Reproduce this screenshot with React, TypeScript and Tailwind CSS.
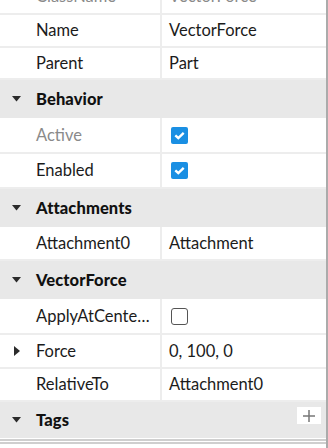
import React from "react";

type Row =
  | { kind: "prop"; label: string; value?: string; check?: boolean; muted?: boolean; expand?: boolean; h: string }
  | { kind: "head"; label: string; plus?: boolean; h: string };

const rows: Row[] = [
  { kind: "prop", label: "ClassName", value: "VectorForce", muted: true, h: "h-[35px] -mt-[20px]" },
  { kind: "prop", label: "Name", value: "VectorForce", h: "h-[33px]" },
  { kind: "prop", label: "Parent", value: "Part", h: "h-[32px]" },
  { kind: "head", label: "Behavior", h: "h-[38px]" },
  { kind: "prop", label: "Active", check: true, muted: true, h: "h-[36px]" },
  { kind: "prop", label: "Enabled", check: true, h: "h-[35px]" },
  { kind: "head", label: "Attachments", h: "h-[38px]" },
  { kind: "prop", label: "Attachment0", value: "Attachment", h: "h-[34px]" },
  { kind: "head", label: "VectorForce", h: "h-[38px]" },
  { kind: "prop", label: "ApplyAtCente…", check: false, h: "h-[36px]" },
  { kind: "prop", label: "Force", value: "0, 100, 0", expand: true, h: "h-[34px]" },
  { kind: "prop", label: "RelativeTo", value: "Attachment0", h: "h-[33px]" },
  { kind: "head", label: "Tags", plus: true, h: "h-[36px]" },
];

function Check({ on }: { on: boolean }) {
  if (on)
    return (
      <div className="w-[17px] h-[17px] rounded-[2px] bg-[#1a8fe3] flex items-center justify-center">
        <svg width="11" height="9" viewBox="0 0 11 9">
          <path d="M1.3 4.3 L4.3 7 L9.7 1.8" fill="none" stroke="white" strokeWidth="2.4" />
        </svg>
      </div>
    );
  return <div className="w-[17px] h-[17px] rounded-[3px] border-[1.5px] border-[#555] bg-white" />;
}

export default function App() {
  return (
    <div
      className="w-[328px] h-[448px] overflow-hidden bg-white flex"
      style={{ fontFamily: "Lato, 'Noto Sans', sans-serif" }}
    >
      <div className="w-[326px] flex flex-col">
        {rows.map((r, i) =>
          r.kind === "head" ? (
            <div key={i} className={`${r.h} shrink-0 bg-[#e8e8e8] flex items-center relative`}>
              <div className="w-[36px] flex justify-center pl-[2px] pr-[6px]">
                <svg width="9" height="6" viewBox="0 0 9 6">
                  <path d="M0 0 H9 L4.5 5.5 Z" fill="#2b2b2b" />
                </svg>
              </div>
              <span className="text-[16.5px] font-black text-[#111] tracking-[0.1px]">{r.label}</span>
              {r.plus && (
                <div className="absolute right-[5px] top-[5px] w-[24px] h-[17px] bg-white flex items-center justify-center">
                  <svg width="12" height="12" viewBox="0 0 12 12">
                    <path d="M6 0 V12 M0 6 H12" stroke="#777" strokeWidth="1.5" />
                  </svg>
                </div>
              )}
            </div>
          ) : (
            <div key={i} className={`${r.h} shrink-0 flex border-b-2 border-[#ededed]`}>
              <div className="w-[162px] flex items-center border-r-2 border-[#ededed] overflow-hidden">
                <div className="w-[36px] shrink-0 flex justify-center pl-[4px] pr-[6px]">
                  {r.expand && (
                    <svg width="6" height="10" viewBox="0 0 6 10">
                      <path d="M0 0 L6 5 L0 10 Z" fill="#2b2b2b" />
                    </svg>
                  )}
                </div>
                <span
                  className={`text-[16.5px] whitespace-nowrap ${r.muted ? "text-[#8a8a8a]" : "text-[#1b1b1b]"}`}
                >
                  {r.label}
                </span>
              </div>
              <div className="flex-1 flex items-center pl-[7px]">
                {r.check !== undefined ? (
                  <div className="pl-[2px]">
                    <Check on={r.check} />
                  </div>
                ) : (
                  <span
                    className={`text-[16.5px] whitespace-nowrap ${r.muted ? "text-[#8a8a8a]" : "text-[#1b1b1b]"}`}
                  >
                    {r.value}
                  </span>
                )}
              </div>
            </div>
          )
        )}
        <div className="h-[1px] bg-white" />
        <div className="h-[2px] bg-[#cfcfcf]" />
        <div className="h-[1px] bg-white" />
        <div className="h-[2px] bg-[#cfcfcf]" />
      </div>
      <div className="w-[2px] bg-[#ababab]" />
    </div>
  );
}
